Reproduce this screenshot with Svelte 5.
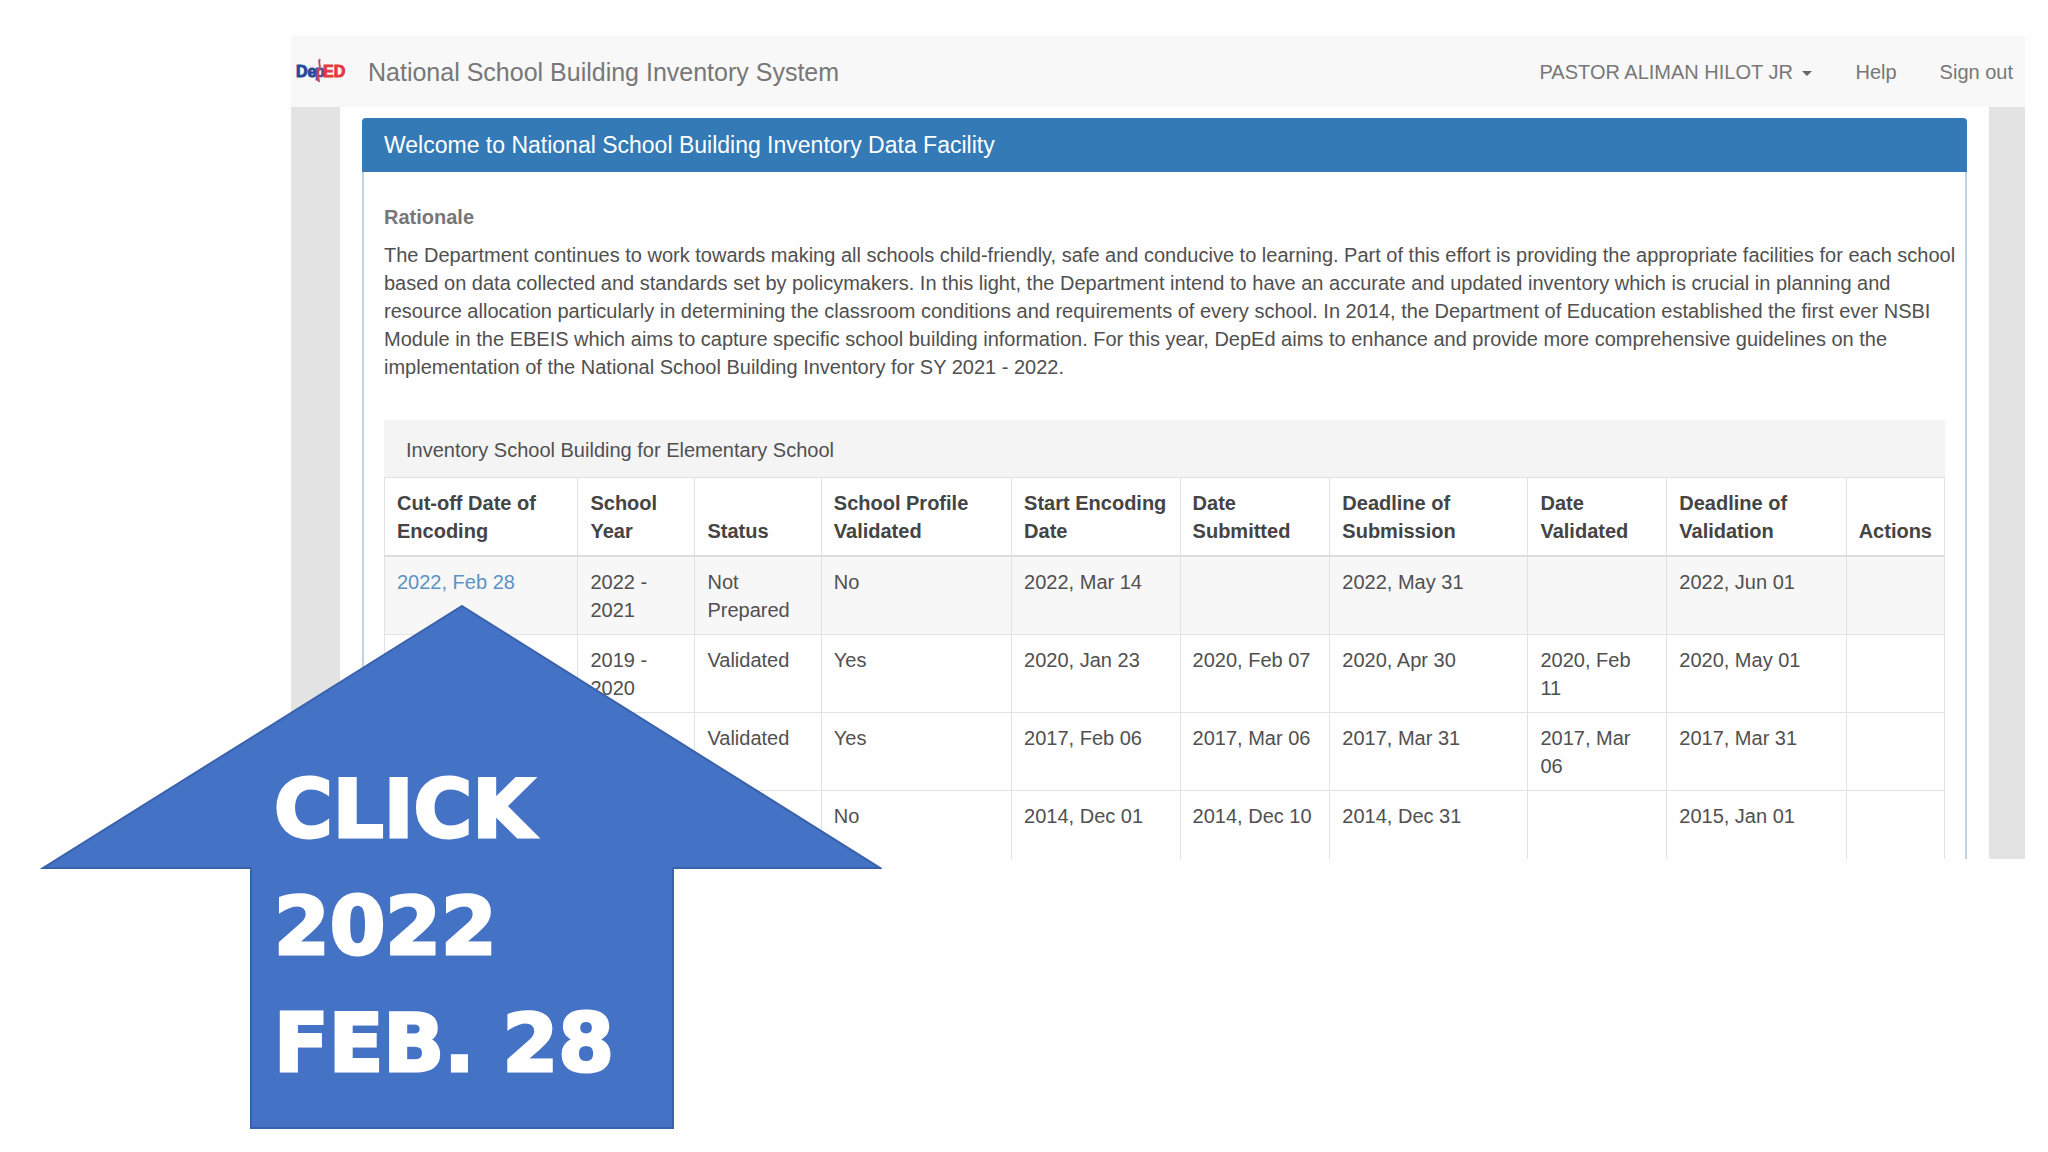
<script>
	const columns = [
		{ label: 'Cut-off Date of Encoding', width: 12.4 },
		{ label: 'School Year', width: 7.5 },
		{ label: 'Status', width: 8.1 },
		{ label: 'School Profile Validated', width: 12.2 },
		{ label: 'Start Encoding Date', width: 10.8 },
		{ label: 'Date Submitted', width: 9.6 },
		{ label: 'Deadline of Submission', width: 12.7 },
		{ label: 'Date Validated', width: 8.9 },
		{ label: 'Deadline of Validation', width: 11.5 },
		{ label: 'Actions', width: 6.3 }
	]

	// first cell is the cut-off date, linked when the period is still open
	const rows = [
		['2022, Feb 28', '2022 -\n2021', 'Not\nPrepared', 'No', '2022, Mar 14', '', '2022, May 31', '', '2022, Jun 01', ''],
		['', '2019 -\n2020', 'Validated', 'Yes', '2020, Jan 23', '2020, Feb 07', '2020, Apr 30', '2020, Feb\n11', '2020, May 01', ''],
		['', '', 'Validated', 'Yes', '2017, Feb 06', '2017, Mar 06', '2017, Mar 31', '2017, Mar\n06', '2017, Mar 31', ''],
		['', '', '', 'No', '2014, Dec 01', '2014, Dec 10', '2014, Dec 31', '', '2015, Jan 01', '']
	]
</script>

<div class="slide">
	<div class="app">
		<header>
			<a class="brand" href="#home">
				<svg class="logo" width="52" height="30" viewBox="0 0 52 30" role="img" aria-label="DepED">
					<text x="0" y="20" fill="#26479a" stroke="#26479a">De</text>
					<text x="19" y="20" fill="#6a4a9a" stroke="#6a4a9a">p</text>
					<text x="27" y="20" fill="#e5383f" stroke="#e5383f">ED</text>
					<path d="M24 2c-3 4 2 6-1 10c-2 4-1 8 0 13" fill="none" stroke="#c8435c" stroke-width="2" />
				</svg>
				<span>National School Building Inventory System</span>
			</a>
			<nav>
				<button type="button">PASTOR ALIMAN HILOT JR <i class="caret"></i></button>
				<a href="#help">Help</a>
				<a href="#signout">Sign out</a>
			</nav>
		</header>

		<div class="page">
			<main>
				<section class="panel">
					<h1>Welcome to National School Building Inventory Data Facility</h1>
					<div class="panel-body">
						<h2>Rationale</h2>
						<p>
							The Department continues to work towards making all schools child-friendly, safe and conducive to learning. Part of this effort is providing the appropriate facilities for each school<br>
							based on data collected and standards set by policymakers. In this light, the Department intend to have an accurate and updated inventory which is crucial in planning and<br>
							resource allocation particularly in determining the classroom conditions and requirements of every school. In 2014, the Department of Education established the first ever NSBI<br>
							Module in the EBEIS which aims to capture specific school building information. For this year, DepEd aims to enhance and provide more comprehensive guidelines on the<br>
							implementation of the National School Building Inventory for SY 2021 - 2022.
						</p>

						<h3 id="elementary">Inventory School Building for Elementary School</h3>
						<table aria-labelledby="elementary">
							<colgroup>
								{#each columns as column}
									<col style="width: {column.width}%">
								{/each}
							</colgroup>
							<thead>
								<tr>
									{#each columns as column}
										<th scope="col">{column.label}</th>
									{/each}
								</tr>
							</thead>
							<tbody>
								{#each rows as row}
									<tr>
										{#each row as cell, i}
											<td>{#if i === 0 && cell}<a href="#encode">{cell}</a>{:else}{cell}{/if}</td>
										{/each}
									</tr>
								{/each}
							</tbody>
						</table>
					</div>
				</section>
			</main>
		</div>
	</div>

	<div class="callout">
		<svg width="842" height="524" viewBox="0 0 842 524" aria-hidden="true">
			<path d="M422 1L840 263H633V523H211V263H3Z" fill="#4472c4" stroke="#3a62ab" stroke-width="2" />
		</svg>
		<strong>CLICK<br>2022<br>FEB. 28</strong>
	</div>
</div>

<style>
	:global(body){
		background: #fefefe;
	}

	.slide{
		position: relative;
		box-sizing: border-box;
		min-height: 100vh;
		padding: 36px 23px 24px 291px;
		font-family: "Liberation Sans", Arial, sans-serif;
		font-size: 20px;
		line-height: 28px;
		color: #505050;
	}

	header{
		display: flex;
		justify-content: space-between;
		align-items: center;
		height: 71px;
		padding: 0 12px 0 5px;
		background: #f8f8f8;
	}
	.brand{
		display: flex;
		align-items: center;
		gap: 20px;
		font-size: 25px;
		color: #777;
		text-decoration: none;
	}
	.logo text{
		font-family: "Liberation Sans", Arial, sans-serif;
		font-size: 16px;
		font-weight: bold;
	}
	nav{
		display: flex;
		align-items: center;
		gap: 43px;
	}
	nav a, nav button{
		padding: 0;
		border: 0;
		background: none;
		font: inherit;
		color: #777;
		text-decoration: none;
	}
	.caret{
		display: inline-block;
		margin-left: 4px;
		border: 5px solid transparent;
		border-top-color: #666;
		border-bottom: 0;
		vertical-align: middle;
	}

	.page{
		padding: 0 36px 0 49px;
		background: #e3e3e3;
	}
	main{
		padding: 11px 22px 0;
		background: #fefefe;
	}
	.panel{
		border: 2px solid #bfd3e2;
		border-width: 0 2px;
		border-radius: 5px 5px 0 0;
	}
	h1{
		margin: 0 -2px;
		padding: 13px 22px;
		border-radius: 4px 4px 0 0;
		background: #337ab7;
		font-size: 23px;
		font-weight: normal;
		color: #fff;
	}
	.panel-body{
		padding: 31px 20px 0;
	}
	h2{
		margin: 0 0 10px;
		font-size: 20px;
		color: #777;
	}
	p{
		margin: 0 0 39px;
		white-space: nowrap;
	}

	h3{
		margin: 0;
		padding: 16px 22px 13px;
		background: #f4f4f4;
		font-size: 20px;
		font-weight: normal;
	}
	table{
		width: 100%;
		table-layout: fixed;
		border-collapse: collapse;
	}
	th, td{
		padding: 11px 8px 10px 12px;
		border: 1px solid #e2e2e2;
		text-align: left;
		vertical-align: top;
		white-space: pre-line;
	}
	th{
		border-bottom: 2px solid #ddd;
		vertical-align: bottom;
		color: #444;
	}
	tbody tr:first-child{
		background: #f7f7f7;
	}
	tbody tr:last-child td{
		padding-bottom: 29px;
		border-bottom: 0;
	}
	td a{
		color: #5b93c4;
		text-decoration: none;
	}

	.callout{
		position: absolute;
		top: 605px;
		left: 40px;
	}
	.callout svg{
		display: block;
	}
	.callout strong{
		position: absolute;
		top: 146px;
		left: 234px;
		font-family: "DejaVu Sans", sans-serif;
		font-size: 80px;
		font-weight: bold;
		line-height: 117px;
		white-space: nowrap;
		color: #fff;
		-webkit-text-stroke: 3px #fff;
	}
</style>
